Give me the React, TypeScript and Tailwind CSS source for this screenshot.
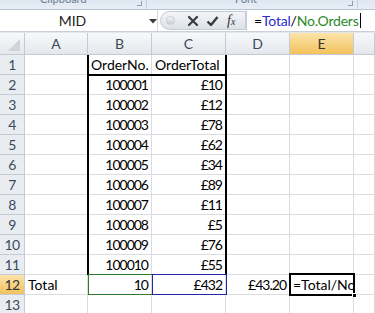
import React from "react";

const cols = [25, 63, 64, 74, 64, 64, 21];
const totals = ["£10", "£12", "£78", "£62", "£34", "£89", "£11", "£5", "£76", "£55"];

type Cell = { t?: string; a?: "l" | "r" };

function rowData(r: number): Cell[] {
  if (r === 1) return [{}, { t: "OrderNo.", a: "l" }, { t: "OrderTotal", a: "l" }, {}, {}, {}];
  if (r >= 2 && r <= 11)
    return [{}, { t: String(100000 + r - 1), a: "r" }, { t: totals[r - 2], a: "r" }, {}, {}, {}];
  if (r === 12)
    return [
      { t: "Total", a: "l" },
      { t: "10", a: "r" },
      { t: "£432", a: "r" },
      { t: "£43.20", a: "r" },
      { t: "=Total/No", a: "l" },
      {},
    ];
  return [{}, {}, {}, {}, {}, {}];
}

export default function App() {
  const rows = Array.from({ length: 13 }, (_, i) => i + 1);
  return (
    <div
      className="w-[375px] h-[313px] overflow-hidden bg-white text-[#000] relative"
      style={{ fontFamily: "Lato, 'Open Sans', sans-serif" }}
    >
      {/* ribbon strip */}
      <div className="h-[10px] bg-gradient-to-b from-[#dfe7f1] to-[#e9eef5] border-b border-[#b9c4d2] flex relative overflow-hidden">
        <div className="w-[147px] border-r border-[#c3cddb] relative">
          <span className="absolute left-[40px] -top-[9px] text-[11px] text-[#6b7c93]">Clipboard</span>
          <span className="absolute right-[4px] top-[1px] w-[5px] h-[5px] border-r border-b border-[#8f9db0]" />
        </div>
        <div className="w-[211px] border-r border-[#c3cddb] relative">
          <span className="absolute left-[88px] -top-[9px] text-[11px] text-[#6b7c93]">Font</span>
          <span className="absolute right-[4px] top-[1px] w-[5px] h-[5px] border-r border-b border-[#8f9db0]" />
        </div>
      </div>

      {/* formula bar */}
      <div className="h-[21px] flex items-stretch bg-white">
        <div className="w-[158px] flex items-center relative border-r border-[#d5dbe3]">
          <span className="w-[145px] text-center text-[14px] text-[#222]">MID</span>
          <svg width="8" height="5" viewBox="0 0 8 5" className="absolute left-[149px] top-[9px]">
            <path d="M0 0 L8 0 L4 4.5 Z" fill="#3a3a3a" />
          </svg>
        </div>
        <div className="w-[88px] flex items-center bg-white">
          <div className="h-[19px] w-[86px] ml-[2px] rounded-l-full bg-gradient-to-b from-[#f3f5f8] to-[#dde2e9] border border-[#c4ccd6] flex items-center">
            <span className="ml-[5px] w-[9px] h-[9px] rounded-full bg-gradient-to-b from-[#f4f6f8] to-[#c9cfd6] border border-[#c9ced5]" />
            <svg width="12" height="12" viewBox="0 0 12 12" className="ml-[12px]">
              <path d="M2 2 L10 10 M10 2 L2 10" stroke="#3c3c3c" strokeWidth="2.2" strokeLinecap="round" />
            </svg>
            <svg width="13" height="12" viewBox="0 0 13 12" className="ml-[7px]">
              <path d="M1.5 6.5 L5 10 L11.5 2" stroke="#3c3c3c" strokeWidth="2.4" fill="none" strokeLinejoin="round" />
            </svg>
            <span
              className="ml-[8px] text-[14px] italic text-[#333] leading-none"
              style={{ fontFamily: "'Liberation Serif', serif" }}
            >
              f<span className="text-[10px]">x</span>
            </span>
          </div>
        </div>
        <div className="flex-1 border-l border-[#c8ced6] flex items-center pl-[7px] text-[14px] tracking-[-0.2px] whitespace-nowrap overflow-hidden">
          <span>=</span>
          <span className="text-[#2b2bd0]">Total</span>
          <span>/</span>
          <span className="text-[#2a8a2a]">No.Orders</span>
          <span className="inline-block w-[1px] h-[15px] bg-black ml-[1px]" />
        </div>
      </div>
      <div className="h-[2px] bg-[#e3e7ec] border-t border-[#c9d0d8]" />

      {/* header row */}
      <div className="flex h-[22px] bg-gradient-to-b from-[#f7f8fa] to-[#e4e8ed] border-b border-[#c5cbd3]">
        <div className="w-[25px] border-r border-[#c5cbd3] relative">
          <svg width="12" height="12" viewBox="0 0 12 12" className="absolute right-[4px] bottom-[3px]">
            <path d="M12 0 L12 12 L0 12 Z" fill="#cfd4da" />
          </svg>
        </div>
        {["A", "B", "C", "D", "E", ""].map((h, i) => (
          <div
            key={i}
            className={
              "flex items-center justify-center text-[14px] border-r border-[#c5cbd3] " +
              (h === "E" ? "bg-gradient-to-b from-[#fbe3a8] to-[#f2c25c] text-[#333] " : "text-[#3d4a5a] ")
            }
            style={{ width: cols[i + 1] }}
          >
            {h}
          </div>
        ))}
      </div>

      {/* body */}
      <div className="relative">
        {rows.map((r) => {
          const data = rowData(r);
          return (
            <div key={r} className="flex h-[20px]">
              <div
                className={
                  "w-[25px] flex items-center justify-center text-[14px] tracking-[-0.5px] border-r border-b border-[#c5cbd3] " +
                  (r === 12 ? "bg-gradient-to-b from-[#fbe3a8] to-[#f2c25c] text-[#333]" : "bg-[#e9edf2] text-[#3d4a5a]")
                }
              >
                {r}
              </div>
              {data.map((c, i) => (
                <div
                  key={i}
                  className={
                    "flex items-center border-r border-b border-[#dadcdf] px-[3px] text-[14px] whitespace-nowrap overflow-hidden " +
                    (c.a === "r" ? "justify-end tracking-[-1px]" : "justify-start")
                  }
                  style={{ width: cols[i + 1] }}
                >
                  {c.t}
                </div>
              ))}
            </div>
          );
        })}

        {/* borders B1:C11 */}
        <div className="absolute left-[87px] top-0 w-[2px] h-[220px] bg-black" />
        <div className="absolute left-[225px] top-0 w-[2px] h-[220px] bg-black" />
        <div className="absolute left-[87px] top-[19px] w-[140px] h-[2px] bg-black" />

        {/* B12 green reference */}
        <div className="absolute left-[88px] top-[219px] w-[65px] h-[21px] border border-[#2d7a2d]" />
        {/* C12 blue reference */}
        <div className="absolute left-[152px] top-[219px] w-[75px] h-[21px] border border-[#2424a8]" />
        {/* E12 active */}
        <div className="absolute left-[289px] top-[218px] w-[66px] h-[23px] border-2 border-black" />
        <div className="absolute left-[352px] top-[238px] w-[5px] h-[5px] bg-black border border-white" />
      </div>
    </div>
  );
}
